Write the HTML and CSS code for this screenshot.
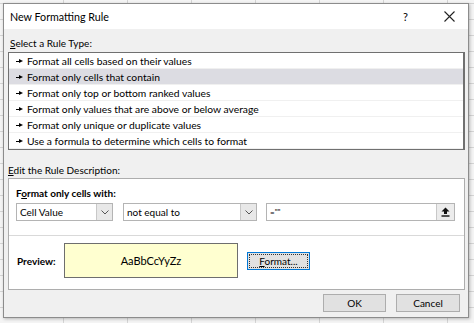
FILE: index.html
```html
<!DOCTYPE html>
<html lang="en">
<head>
  <meta charset="UTF-8">
  <title>New Formatting Rule</title>
  <link rel="stylesheet" href="styles.css">
</head>
<body>
  <div class="dialog">
    <!-- Title bar -->
    <div class="titlebar">
      <span class="title">New Formatting Rule</span>
      <span class="help">?</span>
      <span class="close">
        <svg width="11" height="11" viewBox="0 0 11 11"><path d="M0.5 0.5 L10.5 10.5 M10.5 0.5 L0.5 10.5" stroke="#222" stroke-width="1.1" fill="none"/></svg>
      </span>
    </div>

    <div class="content">
      <div class="label"><u>S</u>elect a Rule Type:</div>
      <ul class="rule-list">
        <li><span class="bullet"></span>Format all cells based on their values</li>
        <li class="selected"><span class="bullet"></span>Format only cells that contain</li>
        <li><span class="bullet"></span>Format only top or bottom ranked values</li>
        <li><span class="bullet"></span>Format only values that are above or below average</li>
        <li><span class="bullet"></span>Format only unique or duplicate values</li>
        <li><span class="bullet"></span>Use a formula to determine which cells to format</li>
      </ul>

      <div class="label section-label"><u>E</u>dit the Rule Description:</div>
      <div class="desc">
        <div class="desc-top">
          <div class="desc-heading">F<u>o</u>rmat only cells with:</div>
          <div class="controls">
            <div class="combo combo-field">
              <span class="combo-text">Cell Value</span>
              <span class="combo-btn"><svg width="8" height="5" viewBox="0 0 8 5"><path d="M0.5 0.5 L4 4 L7.5 0.5" stroke="#555" fill="none"/></svg></span>
            </div>
            <div class="combo combo-op">
              <span class="combo-text">not equal to</span>
              <span class="combo-btn"><svg width="8" height="5" viewBox="0 0 8 5"><path d="M0.5 0.5 L4 4 L7.5 0.5" stroke="#555" fill="none"/></svg></span>
            </div>
            <div class="combo formula">
              <span class="combo-text formula-text">=""</span>
              <span class="combo-btn collapse-btn"><svg width="9" height="10" viewBox="0 0 9 10"><path d="M4.5 0.5 L8.5 4.5 L6 4.5 L6 7 L3 7 L3 4.5 L0.5 4.5 Z" fill="#111"/><rect x="0.5" y="8.3" width="8" height="1.4" fill="#111"/></svg></span>
            </div>
          </div>
        </div>
        <div class="desc-bottom">
          <span class="preview-label">Preview:</span>
          <div class="preview-box">AaBbCcYyZz</div>
          <button class="btn format-btn"><u>F</u>ormat...</button>
        </div>
      </div>

      <div class="actions">
        <button class="btn">OK</button>
        <button class="btn">Cancel</button>
      </div>
    </div>
  </div>
</body>
</html>
```

FILE: styles.css
```css
* {
  margin: 0;
  padding: 0;
  box-sizing: border-box;
}
body {
  width: 474px;
  height: 323px;
  overflow: hidden;
  padding: 3px 0 0 3px;
  font-family: "Segoe UI", Lato, "Noto Sans", sans-serif;
  font-size: 10px;
  color: #000;
  background-color: #f4f4f4;
  background-image:
    repeating-linear-gradient(90deg, transparent 0, transparent 63px, #d4d4d4 63px, #d4d4d4 64px),
    repeating-linear-gradient(0deg, transparent 0, transparent 15px, #d4d4d4 15px, #d4d4d4 16px);
}
.dialog {
  width: 466px;
  height: 315px;
  border: 1px solid #8c8c8c;
  background: #f0f0f0;
  display: flex;
  flex-direction: column;
  box-shadow: 1px 1px 3px rgba(0, 0, 0, 0.25);
}
.titlebar {
  height: 25px;
  background: #fff;
  display: flex;
  align-items: center;
  padding-left: 6px;
}
.title {
  font-size: 10.7px;
  flex: 1;
}
.help {
  font-size: 11px;
  width: 12px;
  margin-right: 29px;
}
.close {
  display: flex;
  align-items: center;
  margin-right: 13px;
}
.content {
  flex: 1;
  padding: 0 3px 0 4px;
  display: flex;
  flex-direction: column;
}
.label {
  height: 14px;
  line-height: 14px;
  margin-top: 7px;
  padding-left: 2px;
}
.section-label {
  margin-top: 13px;
  padding-left: 0;
}
.rule-list {
  list-style: none;
  margin-top: 2px;
  height: 98px;
  border: 1px solid #707070;
  border-right-width: 2px;
  background: #fff;
  font-size: 10.3px;
}
.rule-list li {
  height: 16px;
  line-height: 14px;
  padding-top: 1px;
  border-bottom: 1px solid #f0f0f0;
  display: flex;
  align-items: center;
  padding-left: 7px;
}
.rule-list li.selected {
  background: #dcdce2;
}
.bullet {
  position: relative;
  width: 7px;
  height: 5px;
  margin-right: 4px;
}
.bullet::before {
  content: "";
  position: absolute;
  left: 0;
  top: 2px;
  width: 4px;
  height: 1px;
  background: #000;
}
.bullet::after {
  content: "";
  position: absolute;
  left: 3px;
  top: 0;
  border-left: 4px solid #000;
  border-top: 2.5px solid transparent;
  border-bottom: 2.5px solid transparent;
}
.desc {
  margin-top: 1px;
  height: 112px;
  border: 1px solid #adadad;
  background: #fff;
  display: flex;
  flex-direction: column;
}
.desc-top {
  height: 57px;
  border-bottom: 1px solid #d9d9d9;
  padding: 7px 0 0 7px;
}
.desc-heading {
  font-weight: bold;
  height: 14px;
  line-height: 14px;
}
.controls {
  display: flex;
  margin-top: 3px;
}
.combo {
  height: 18px;
  border: 1px solid #b4b4b4;
  display: flex;
  align-items: stretch;
  background: #fff;
}
.combo-field {
  width: 97px;
}
.combo-op {
  width: 134px;
  margin-left: 10px;
}
.formula {
  width: 189px;
  margin-left: 9px;
}
.combo-text {
  flex: 1;
  padding-left: 3px;
  line-height: 16px;
}
.formula-text {
  font-size: 8px;
}
.combo-btn {
  width: 16px;
  background: #e8e8e8;
  border-left: 1px solid #c8c8c8;
  display: flex;
  align-items: center;
  justify-content: center;
}
.collapse-btn {
  width: 18px;
  background: #ececec;
}
.desc-bottom {
  flex: 1;
  display: flex;
  align-items: center;
  padding: 0 0 4px 8px;
}
.preview-label {
  font-weight: bold;
  width: 47px;
}
.preview-box {
  width: 174px;
  height: 35px;
  border: 1px solid #6e6e6e;
  background: #ffffd0;
  display: flex;
  align-items: center;
  justify-content: center;
  font-size: 11px;
}
.btn {
  font-family: inherit;
  font-size: 10px;
  color: #000;
  width: 63px;
  height: 18px;
  border: 1px solid #adadad;
  background: #e1e1e1;
}
.format-btn {
  margin-left: 9px;
  border: 1px solid #0078d7;
  outline: 1px dotted #333;
  outline-offset: -3px;
}
.actions {
  display: flex;
  justify-content: flex-end;
  gap: 10px;
  margin-top: 4px;
  padding-right: 5px;
}
.actions .btn:last-child {
  width: 64px;
}
```
